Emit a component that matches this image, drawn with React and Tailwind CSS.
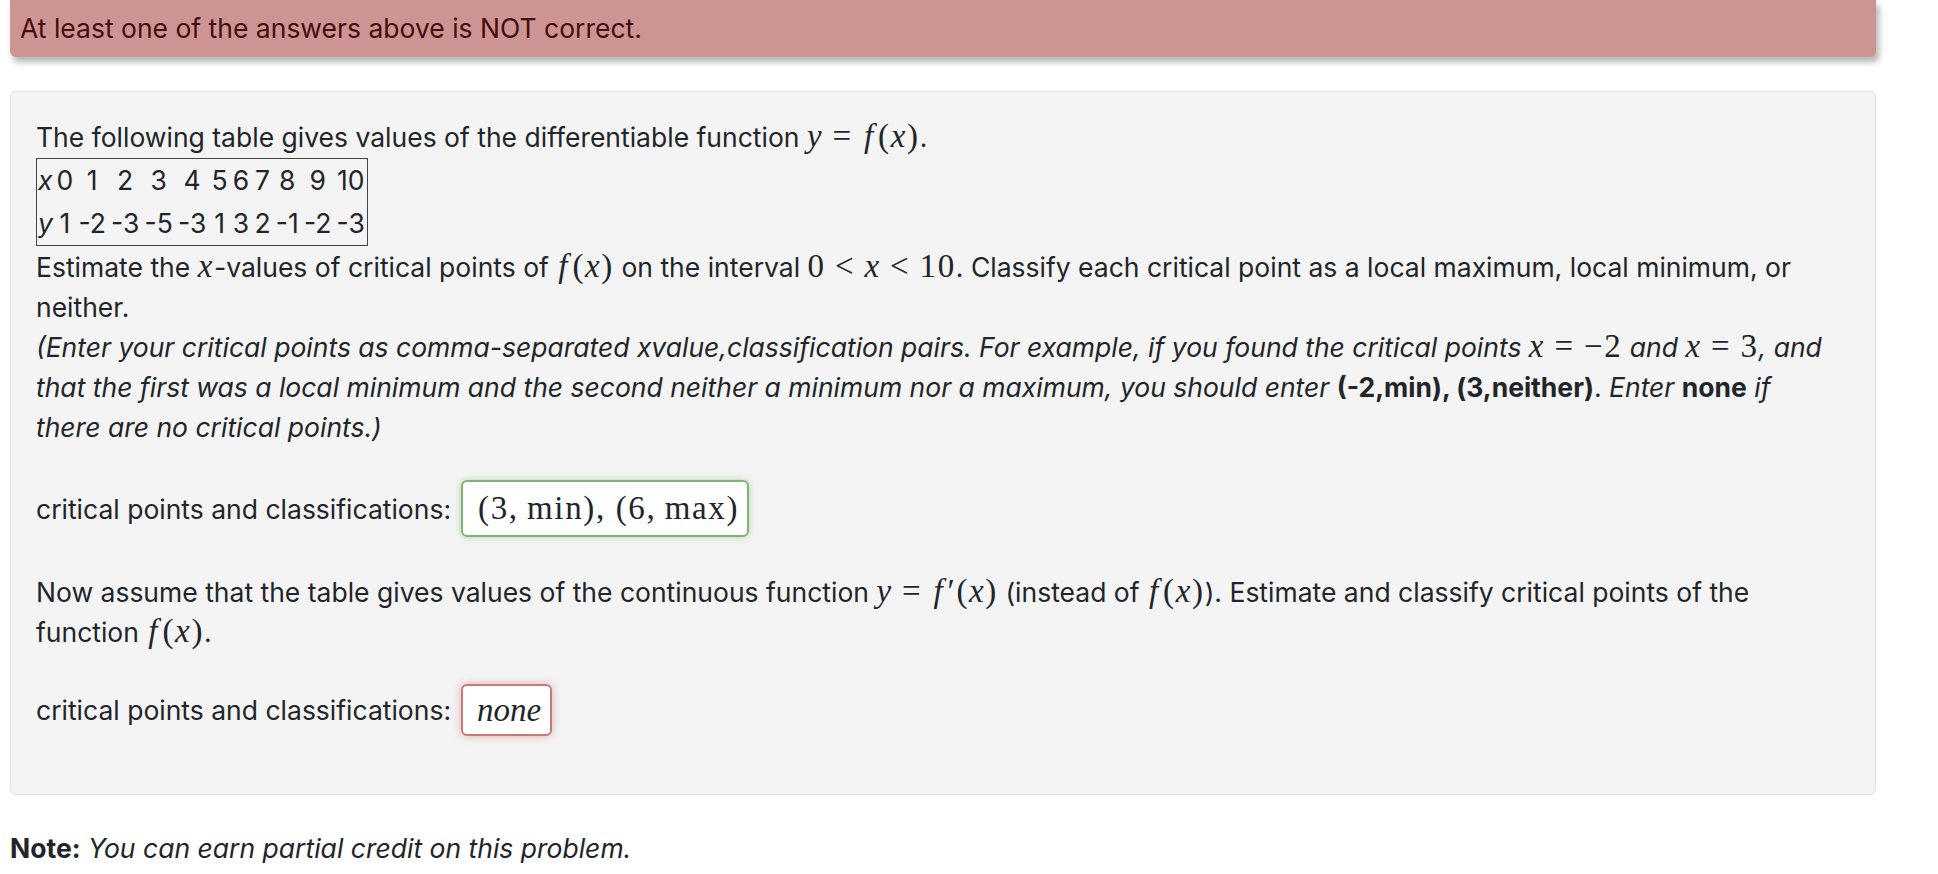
import React from "react";

// inline math, roughly like the KaTeX rendering on the page
function M({ children, className = "" }) {
  return (
    <span
      className={
        "font-['Liberation_Serif',serif] not-italic text-[33px] tracking-[0.05em] leading-none whitespace-nowrap " +
        className
      }
    >
      {children}
    </span>
  );
}

function I({ children }) {
  return <span className="italic">{children}</span>;
}

// italic f with a little italic correction
function F() {
  return <span className="italic ml-[0.06em] mr-[0.1em]">f</span>;
}

// relation sign with KaTeX-like thick spacing
function R({ children }) {
  return <span className="mx-[0.28em]">{children}</span>;
}

const xs = ["0", "1", "2", "3", "4", "5", "6", "7", "8", "9", "10"];
const ys = ["1", "-2", "-3", "-5", "-3", "1", "3", "2", "-1", "-2", "-3"];

export default function App() {
  return (
    <div className="min-h-screen bg-white font-['Inter',sans-serif] text-[#212529] text-[26.5px]">
      <div className="w-[1866px] ml-[10px]">
        {/* result banner */}
        <div className="h-[57px] flex items-center px-[10px] rounded-b-[6px] bg-[#cd9494] text-[#450d0d] shadow-[3px_5px_6px_rgba(0,0,0,0.3)]">
          At least one of the answers above is NOT correct.
        </div>

        {/* problem body */}
        <div className="mt-[34px] bg-[#f4f4f4] border border-[#e2e2e2] rounded-[5px] pl-[25px] pr-[36px] pt-[25px] pb-[58px] leading-[40px]">
          <div>
            The following table gives values of the differentiable function{" "}
            <M>
              <I>y</I>
              <R>=</R>
              <F />(<I>x</I>)
            </M>
            .
          </div>

          <table className="border border-[#444] border-collapse leading-[43px] my-[1px]">
            <tbody>
              <tr>
                <td className="px-[1px] italic">x</td>
                {xs.map((v, i) => (
                  <td key={i} className="px-[2.6px] text-center">
                    {v}
                  </td>
                ))}
              </tr>
              <tr>
                <td className="px-[1px] italic">y</td>
                {ys.map((v, i) => (
                  <td key={i} className="px-[2.6px] text-center">
                    {v}
                  </td>
                ))}
              </tr>
            </tbody>
          </table>

          <div>
            Estimate the{" "}
            <M>
              <I>x</I>
            </M>
            -values of critical points of{" "}
            <M>
              <F />(<I>x</I>)
            </M>{" "}
            on the interval{" "}
            <M>
              0<R>&lt;</R>
              <I>x</I>
              <R>&lt;</R>10
            </M>
            . Classify each critical point as a local maximum, local minimum, or neither.
            <br />
            <span className="italic">
              (Enter your critical points as comma-separated xvalue,classification pairs. For example, if you found the critical points{" "}
              <M>
                <I>x</I>
                <R>=</R>−2
              </M>{" "}
              and{" "}
              <M>
                <I>x</I>
                <R>=</R>3
              </M>
              , and that the first was a local minimum and the second neither a minimum nor a maximum, you should enter{" "}
            </span>
            <b>(-2,min), (3,neither)</b>. <I>Enter</I> <b>none</b>{" "}
            <I>if there are no critical points.)</I>
          </div>

          <div className="mt-[33px] flex items-center gap-[10px]">
            <span>critical points and classifications:</span>
            <div className="h-[57px] w-[288px] flex items-center pl-[15px] bg-white border-2 border-[#80b577] rounded-[6px] shadow-[0_0_6px_rgba(95,170,80,0.45)]">
              <M className="tracking-[0.04em]">(3,&thinsp;min), (6,&thinsp;max)</M>
            </div>
          </div>

          <div className="mt-[35px]">
            Now assume that the table gives values of the continuous function{" "}
            <M>
              <I>y</I>
              <R>=</R>
              <F />′(<I>x</I>)
            </M>{" "}
            (instead of{" "}
            <M>
              <F />(<I>x</I>)
            </M>
            ). Estimate and classify critical points of the function{" "}
            <M>
              <F />(<I>x</I>)
            </M>
            .
          </div>

          <div className="mt-[32px] flex items-center gap-[10px]">
            <span>critical points and classifications:</span>
            <div className="h-[52px] w-[91px] flex items-center pl-[14px] bg-white border-2 border-[#c97a78] rounded-[6px] shadow-[0_0_8px_rgba(200,90,90,0.45)]">
              <M className="tracking-normal">
                <I>none</I>
              </M>
            </div>
          </div>
        </div>

        <div className="mt-[33px] leading-[40px]">
          <b>Note:</b> <I>You can earn partial credit on this problem.</I>
        </div>
      </div>
    </div>
  );
}
